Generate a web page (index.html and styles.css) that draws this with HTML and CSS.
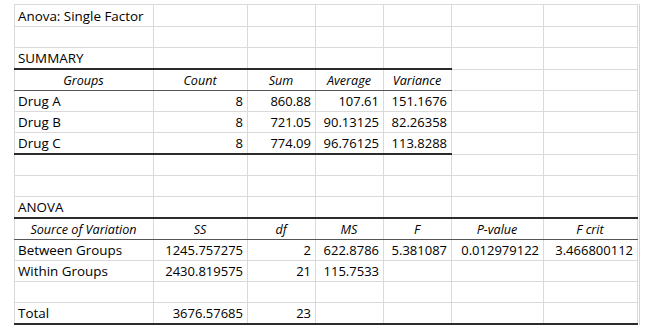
FILE: index.html
```html
<!DOCTYPE html>
<html>
<head>
<meta charset="utf-8">
<link rel="stylesheet" href="styles.css">
</head>
<body>
<div class="sheet">
<table class="grid">
<colgroup>
<col class="c-a"><col class="c-b"><col class="c-c"><col class="c-d"><col class="c-e"><col class="c-f"><col class="c-g">
</colgroup>
<tbody>
<tr class="first"><td>Anova: Single Factor</td><td></td><td></td><td></td><td></td><td></td><td></td></tr>
<tr><td></td><td></td><td></td><td></td><td></td><td></td><td></td></tr>
<tr class="thick-s"><td>SUMMARY</td><td></td><td></td><td></td><td></td><td></td><td></td></tr>
<tr class="head-s"><td class="h">Groups</td><td class="h">Count</td><td class="h">Sum</td><td class="h">Average</td><td class="h">Variance</td><td></td><td></td></tr>
<tr><td>Drug A</td><td class="n">8</td><td class="n">860.88</td><td class="n">107.61</td><td class="n">151.1676</td><td></td><td></td></tr>
<tr><td>Drug B</td><td class="n">8</td><td class="n">721.05</td><td class="n">90.13125</td><td class="n">82.26358</td><td></td><td></td></tr>
<tr class="thick-s"><td>Drug C</td><td class="n">8</td><td class="n">774.09</td><td class="n">96.76125</td><td class="n">113.8288</td><td></td><td></td></tr>
<tr><td></td><td></td><td></td><td></td><td></td><td></td><td></td></tr>
<tr><td></td><td></td><td></td><td></td><td></td><td></td><td></td></tr>
<tr class="thick-a"><td>ANOVA</td><td></td><td></td><td></td><td></td><td></td><td></td></tr>
<tr class="head-a"><td class="h">Source of Variation</td><td class="h">SS</td><td class="h">df</td><td class="h">MS</td><td class="h">F</td><td class="h">P-value</td><td class="h">F crit</td></tr>
<tr><td>Between Groups</td><td class="n">1245.757275</td><td class="n">2</td><td class="n">622.8786</td><td class="n">5.381087</td><td class="n">0.012979122</td><td class="n">3.466800112</td></tr>
<tr><td>Within Groups</td><td class="n">2430.819575</td><td class="n">21</td><td class="n">115.7533</td><td></td><td></td><td></td></tr>
<tr><td></td><td></td><td></td><td></td><td></td><td></td><td></td></tr>
<tr class="thick-a"><td>Total</td><td class="n">3676.57685</td><td class="n">23</td><td></td><td></td><td></td><td></td></tr>
</tbody>
</table>
</div>
</body>
</html>
```

FILE: styles.css
```css
html, body {
  margin: 0;
  padding: 0;
  background: #ffffff;
}

.sheet {
  display: inline-block;
  margin: 4px 0 0 14px;
  padding-right: 1px;
  border-right: 1px solid #d4d4d4;
}

.grid {
  border-collapse: collapse;
  table-layout: fixed;
  width: 623px;
  font-family: "Open Sans", "Lato", sans-serif;
  font-size: 13.4px;
  color: #000;
}

.c-a { width: 139px; }
.c-b { width: 94px; }
.c-c { width: 68px; }
.c-d { width: 68px; }
.c-e { width: 68px; }
.c-f { width: 92px; }
.c-g { width: 94px; }

.grid td {
  height: 20px;
  padding: 0 4px 0 3px;
  border: 1px solid #dadada;
  vertical-align: bottom;
  white-space: nowrap;
  overflow: hidden;
  line-height: 19px;
}

.grid tr.first td { height: 21px; }

.grid td.n { text-align: right; font-size: 13px; }
.grid td.h { text-align: center; font-style: italic; font-size: 12.6px; }

.grid tr.thick-s td:nth-child(-n+5) { border-bottom: 2px solid #2b2b2b; }
.grid tr.head-s td:nth-child(-n+5) { border-bottom: 1px solid #555; }
.grid tr.thick-a td { border-bottom: 2px solid #2b2b2b; }
.grid tr.head-a td { border-bottom: 1px solid #555; }
```
